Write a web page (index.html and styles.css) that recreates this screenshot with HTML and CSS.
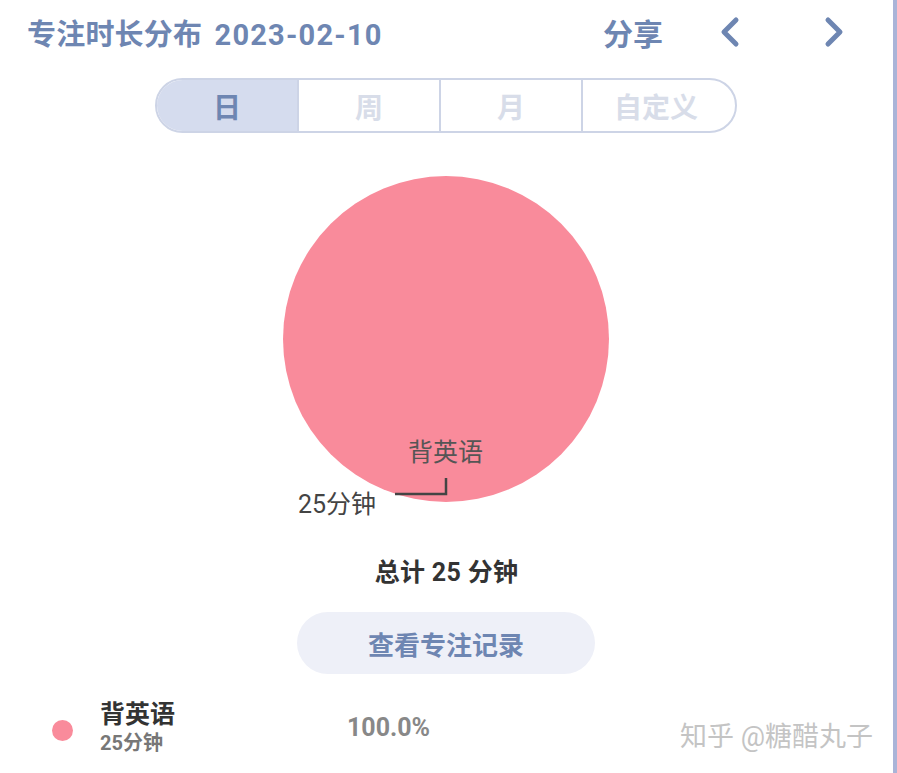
FILE: index.html
```html
<!DOCTYPE html>
<html lang="zh-CN">
  <head>
    <meta charset="UTF-8" />
    <meta name="viewport" content="width=device-width, initial-scale=1.0" />
    <title>专注时长分布</title>
    <link rel="stylesheet" href="styles.css">
  </head>
  <body>
    <div class="page">
      <div class="header">
        <h1 class="title">专注时长分布 <span class="date">2023-02-10</span></h1>
        <span class="share">分享</span>
        <svg class="arrow prev" width="22" height="32" viewBox="0 0 22 32">
          <path d="M17 4 L5 16 L17 28" />
        </svg>
        <svg class="arrow next" width="22" height="32" viewBox="0 0 22 32">
          <path d="M5 4 L17 16 L5 28" />
        </svg>
      </div>

      <div class="tabs">
        <div class="tab active">日</div>
        <div class="tab">周</div>
        <div class="tab">月</div>
        <div class="tab last">自定义</div>
      </div>

      <svg class="chart" width="893" height="390" viewBox="0 0 893 390">
        <circle cx="446" cy="199" r="163" fill="#f98b9b" />
        <path class="leader" d="M395 354 H446 V338" />
        <text class="slice-name" x="408" y="321">背英语</text>
        <text class="slice-value" x="298" y="373">25分钟</text>
      </svg>

      <div class="total">总计 25 分钟</div>

      <button class="records">查看专注记录</button>

      <div class="legend">
        <span class="dot"></span>
        <div class="legend-name">
          <div class="name">背英语</div>
          <div class="minutes">25分钟</div>
        </div>
        <div class="percent">100.0%</div>
        <div class="watermark">知乎 @糖醋丸子</div>
      </div>
    </div>
  </body>
</html>
```

FILE: styles.css
```css
body {
  margin: 0;
  padding: 0;
  background-color: #fff;
  font-family: Roboto, "Noto Sans CJK SC", sans-serif;
}

.page {
  width: 893px;
  height: 773px;
  border-right: 4px solid #aab4d8;
  display: flex;
  flex-direction: column;
  overflow: hidden;
}

.header {
  display: flex;
  align-items: center;
  height: 64px;
  padding-left: 27px;
  color: #6e86b2;
}

.title {
  margin: 0;
  font-size: 29px;
  font-weight: bold;
  flex: 1;
  letter-spacing: 0.2px;
}

.date {
  margin-left: 5px;
  letter-spacing: 1.2px;
}

.share {
  font-size: 30px;
  font-weight: bold;
  margin-right: 56px;
}

.arrow path {
  fill: none;
  stroke: #6e86b2;
  stroke-width: 5;
  stroke-linecap: round;
  stroke-linejoin: round;
}

.arrow.prev {
  margin-right: 82px;
}

.arrow.next {
  margin-right: 48px;
}

.tabs {
  display: flex;
  margin: 14px 0 0 155px;
  width: 582px;
  height: 55px;
  box-sizing: border-box;
  border: 2px solid #cdd4e6;
  border-radius: 28px;
  overflow: hidden;
}

.tab {
  width: 142px;
  display: flex;
  align-items: center;
  justify-content: center;
  font-size: 28px;
  font-weight: bold;
  color: #d8dde9;
  border-right: 2px solid #cdd4e6;
  box-sizing: border-box;
}

.tab.active {
  background-color: #d5dcee;
  color: #6e86b2;
}

.tab.last {
  flex: 1;
  border-right: none;
  padding-right: 6px;
}

.chart {
  display: block;
  margin-top: 7px;
}

.leader {
  fill: none;
  stroke: #444;
  stroke-width: 2.5;
}

.chart text {
  font-family: Roboto, "Noto Sans CJK SC", sans-serif;
  font-size: 25px;
}

.slice-name {
  fill: #555;
}

.slice-value {
  fill: #444;
}

.total {
  text-align: center;
  font-size: 25px;
  font-weight: bold;
  color: #333;
  margin-top: 22px;
  letter-spacing: 0.3px;
}

.records {
  align-self: flex-start;
  margin: 24px 0 0 297px;
  width: 298px;
  height: 62px;
  border: none;
  border-radius: 31px;
  background-color: #eef0f8;
  color: #6e86b2;
  font-family: Roboto, "Noto Sans CJK SC", sans-serif;
  font-size: 26px;
  font-weight: bold;
  padding: 0;
}

.legend {
  display: flex;
  align-items: center;
  margin-top: 25px;
  padding-left: 52px;
}

.dot {
  width: 21px;
  height: 21px;
  border-radius: 50%;
  background-color: #f98b9b;
  margin-top: 6px;
}

.legend-name {
  margin-left: 27px;
  width: 247px;
}

.name {
  font-size: 25px;
  font-weight: bold;
  color: #333;
  line-height: 32px;
}

.minutes {
  font-size: 20px;
  font-weight: bold;
  color: #777;
  line-height: 24px;
}

.percent {
  font-size: 25px;
  font-weight: bold;
  color: #888;
  width: 333px;
}

.watermark {
  font-size: 27px;
  color: #c4c4c4;
  margin-top: 14px;
}
```
